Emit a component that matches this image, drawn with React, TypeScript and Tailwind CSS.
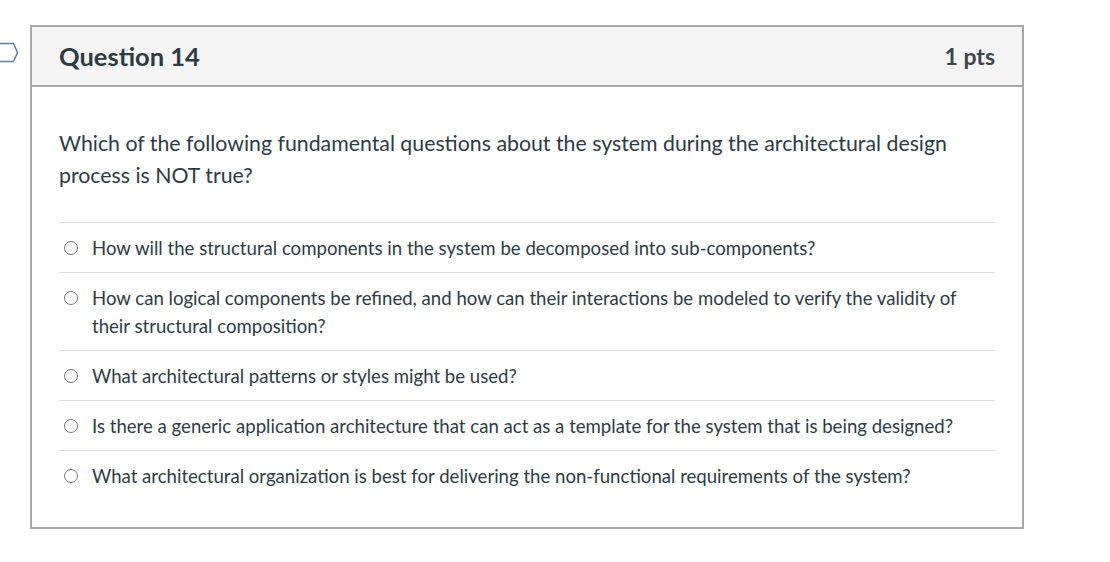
const answers = [
  'How will the structural components in the system be decomposed into sub-components?',
  'How can logical components be refined, and how can their interactions be modeled to verify the validity of their structural composition?',
  'What architectural patterns or styles might be used?',
  'Is there a generic application architecture that can act as a template for the system that is being designed?',
  'What architectural organization is best for delivering the non-functional requirements of the system?',
];

function FlagIcon() {
  return (
    <svg width="20" height="22" viewBox="0 0 20 22" className="block">
      <path d="M-2 1.5 H13.5 L17.5 10.5 L13.5 19.5 H-2" fill="none" stroke="#5b7d9c" strokeWidth="1.5" />
    </svg>
  );
}

export default function App() {
  return (
    <div className="min-h-[562px] bg-white pt-[25px] font-['Lato','Liberation_Sans',sans-serif] text-[#2d3b45]">
      <div className="flex">
        <div className="w-[30px] pt-[17px]">
          <FlagIcon />
        </div>
        <div className="w-[994px] border-2 border-[#a8a8a8]">
          <div className="flex h-[60px] items-center justify-between border-b-2 border-[#a8a8a8] bg-[#f5f5f5] px-[27px]">
            <h2 className="text-[25.5px] font-bold">Question 14</h2>
            <span className="text-[23px] font-bold text-[#3d464d]">1 pts</span>
          </div>
          <div className="px-[27px] pb-[27px] pt-[40px]">
            <p className="text-[21.3px] leading-[32px]">
              Which of the following fundamental questions about the system during the architectural design process is
              NOT true?
            </p>
            <div className="mt-[31px] border-t border-[#dcdcdc]">
              {answers.map((a, i) => (
                <label
                  key={i}
                  className={`flex items-start gap-[14px] py-[10.5px] text-[18.6px] leading-[28px] ${
                    i < answers.length - 1 ? 'border-b border-[#dcdcdc]' : ''
                  }`}
                >
                  <span className="ml-[5px] mt-[7px] h-[14px] w-[14px] shrink-0 rounded-full border border-[#777]" />
                  <span>{a}</span>
                </label>
              ))}
            </div>
          </div>
        </div>
      </div>
    </div>
  );
}
